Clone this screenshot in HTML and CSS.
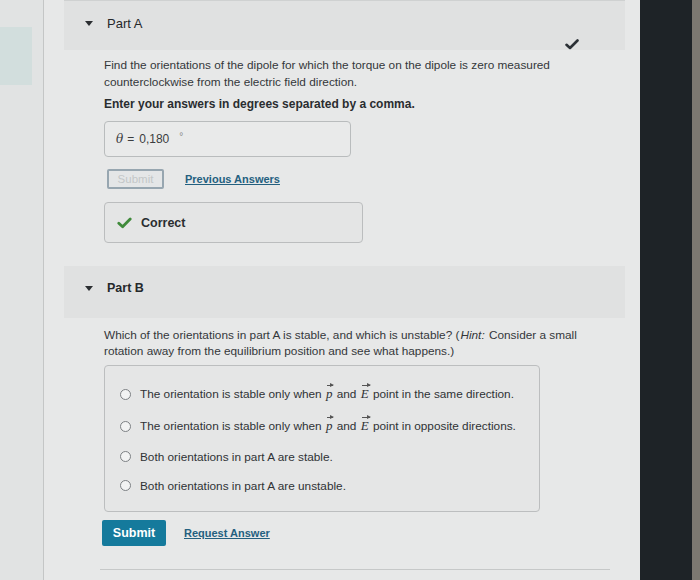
FILE: index.html
```html
<!DOCTYPE html>
<html>
<head>
<meta charset="utf-8">
<link rel="stylesheet" href="styles.css">
</head>
<body>
<div class="screen">
  <aside class="sidebar">
    <div class="sidebar-tab"></div>
  </aside>
  <main class="main">
    <section class="part">
      <div class="part-header first">
        <span class="caret"></span>
        <span class="part-title">Part A</span>
        <svg class="done" width="14" height="11" viewBox="0 0 14 11"><path d="M1.5 5.8 L5 9 L12.5 1.5" fill="none" stroke="#2b3035" stroke-width="2.6" stroke-linecap="round" stroke-linejoin="round"/></svg>
      </div>
      <div class="part-body">
        <p class="prompt">Find the orientations of the dipole for which the torque on the dipole is zero measured counterclockwise from the electric field direction.</p>
        <p class="instr">Enter your answers in degrees separated by a comma.</p>
        <div class="answer-box">
          <span class="theta">θ</span><span class="eq">=</span><span class="val">0,180</span><span class="deg">°</span>
        </div>
        <div class="actions">
          <button class="btn-disabled">Submit</button>
          <a class="link">Previous Answers</a>
        </div>
        <div class="feedback">
          <svg width="15" height="12" viewBox="0 0 15 12"><path d="M1.8 6.2 L5.6 9.8 L13.2 2" fill="none" stroke="#3f8a3a" stroke-width="2.8" stroke-linecap="round" stroke-linejoin="round"/></svg>
          <span>Correct</span>
        </div>
      </div>
    </section>
    <section class="part">
      <div class="part-header second">
        <span class="caret"></span>
        <span class="part-title">Part B</span>
      </div>
      <div class="part-body">
        <p class="prompt q"><span class="line"><span>Which of the orientations in part A is stable, and which is unstable? (</span><i class="hint">Hint:</i><span> Consider a small</span></span><span class="line">rotation away from the equilibrium position and see what happens.)</span></p>
        <div class="choices">
          <label class="choice tall"><span class="radio"></span><span>The orientation is stable only when <span class="vec">p</span> and <span class="vec">E</span> point in the same direction.</span></label>
          <label class="choice tall"><span class="radio"></span><span>The orientation is stable only when <span class="vec">p</span> and <span class="vec">E</span> point in opposite directions.</span></label>
          <label class="choice"><span class="radio"></span><span>Both orientations in part A are stable.</span></label>
          <label class="choice"><span class="radio"></span><span>Both orientations in part A are unstable.</span></label>
        </div>
        <div class="actions b">
          <button class="btn-primary">Submit</button>
          <a class="link">Request Answer</a>
        </div>
      </div>
    </section>
    <div class="rule"></div>
  </main>
  <div class="bezel"></div>
  <div class="edge"></div>
</div>
</body>
</html>
```
FILE: styles.css
```css
* { box-sizing: border-box; }
html, body { margin: 0; padding: 0; }
body {
  width: 700px;
  height: 580px;
  overflow: hidden;
  font-family: "Liberation Sans", Arial, sans-serif;
  color: #2f3235;
  background: #e6e7e7;
}
.screen { display: flex; height: 580px; }
.sidebar {
  width: 44px;
  flex: none;
  background: #e1e3e3;
  border-right: 1px solid #c4c6c6;
  padding-top: 27px;
}
.sidebar-tab { width: 32px; height: 58px; background: #d2dedd; }
.main {
  width: 596px;
  flex: none;
  background: #e7e8e8;
  padding: 0 15px 0 20px;
  display: flex;
  flex-direction: column;
}
.part-header {
  display: flex;
  align-items: flex-start;
  background: #e0e1e1;
  padding-left: 21px;
}
.part-header.first { height: 50px; padding-top: 15px; border-top: 1px solid #cfd1d1; }
.part-header.second { height: 52px; padding-top: 15px; margin-top: 23px; }
.caret {
  width: 0; height: 0;
  border-left: 4px solid transparent;
  border-right: 4px solid transparent;
  border-top: 5px solid #2b2e31;
  margin-top: 5px;
}
.part-title { font-size: 13px; margin-left: 14px; color: #25282b; }
.second .part-title { font-weight: bold; font-size: 12.5px; }
.done { margin-left: auto; margin-right: 46px; align-self: flex-end; margin-bottom: 0; margin-top: auto; }
.part-body { padding-left: 40px; }
.prompt { font-size: 11.8px; line-height: 17px; margin: 7px 0 0; width: 470px; color: #34373a; }
.prompt.q { width: 490px; margin-top: 9px; line-height: 16px; display: flex; flex-direction: column; }
.line { display: block; white-space: nowrap; }
.hint { margin-left: 1px; margin-right: 1px; }
.instr { font-size: 12px; font-weight: bold; margin: 6px 0 0; color: #2a2d30; }
.answer-box {
  margin-top: 10px;
  width: 247px;
  height: 36px;
  border: 1px solid #b9bcbd;
  border-radius: 4px;
  background: #e9eaea;
  display: flex;
  align-items: center;
  padding-left: 11px;
  font-size: 12px;
  color: #3a3d40;
}
.theta { font-family: "DejaVu Serif", serif; font-style: italic; font-size: 12px; }
.eq { margin: 0 5px 0 4px; }
.deg { margin-left: 10px; font-size: 10px; color: #888; margin-top: -6px; }
.actions { display: flex; align-items: center; margin-top: 12px; }
.btn-disabled {
  font-family: inherit;
  width: 57px; height: 20px;
  margin-left: 3px;
  padding: 0;
  background: #e4e6e7;
  border: 2px solid #97a6b0;
  border-radius: 2px;
  color: #c3c6c8;
  font-size: 11.5px;
}
.link { color: #24607f; font-weight: bold; font-size: 11px; text-decoration: underline; margin-left: 21px; }
.feedback {
  margin-top: 13px;
  width: 259px; height: 41px;
  border: 1px solid #bbbdbe;
  border-radius: 4px;
  background: #e4e5e5;
  display: flex;
  align-items: center;
  padding-left: 12px;
  font-weight: bold;
  font-size: 12.5px;
  color: #2a2d30;
}
.feedback svg { margin-right: 9px; }
.choices {
  margin-top: 6px;
  width: 436px;
  border: 1px solid #bcbebf;
  border-radius: 4px;
  background: #e5e6e6;
  padding: 18px 0 17px 15px;
  display: flex;
  flex-direction: column;
  gap: 12px;
}
.choice { display: flex; align-items: center; font-size: 11.8px; color: #2f3235; height: 17px; }
.choice.tall { height: 20px; }
.radio {
  width: 11px; height: 11px;
  border: 1px solid #7d8184;
  border-radius: 50%;
  background: #f2f3f3;
  margin-right: 9px;
  flex: none;
}
.vec {
  position: relative;
  font-family: "Liberation Serif", serif;
  font-style: italic;
  font-size: 13px;
  padding: 0 1px;
}
.vec::before {
  content: "";
  position: absolute;
  left: 2px; right: 0;
  top: -1px;
  height: 1px;
  background: #555;
}
.vec::after {
  content: "";
  position: absolute;
  right: -1px;
  top: -3px;
  border-left: 4px solid #555;
  border-top: 2.5px solid transparent;
  border-bottom: 2.5px solid transparent;
}
.actions.b { margin-top: 8px; }
.btn-primary {
  font-family: inherit;
  width: 64px; height: 26px;
  margin-left: -2px;
  padding: 0;
  border: none;
  border-radius: 2px;
  background: #157a9c;
  color: #fff;
  font-weight: bold;
  font-size: 12.5px;
}
.actions.b .link { margin-left: 18px; }
.rule { margin-top: 23px; margin-left: 36px; width: 510px; height: 1px; background: #c6c8c8; }
.bezel { width: 52px; flex: none; background: #1e2327; }
.edge { flex: 1; background: #7c7871; }
```
